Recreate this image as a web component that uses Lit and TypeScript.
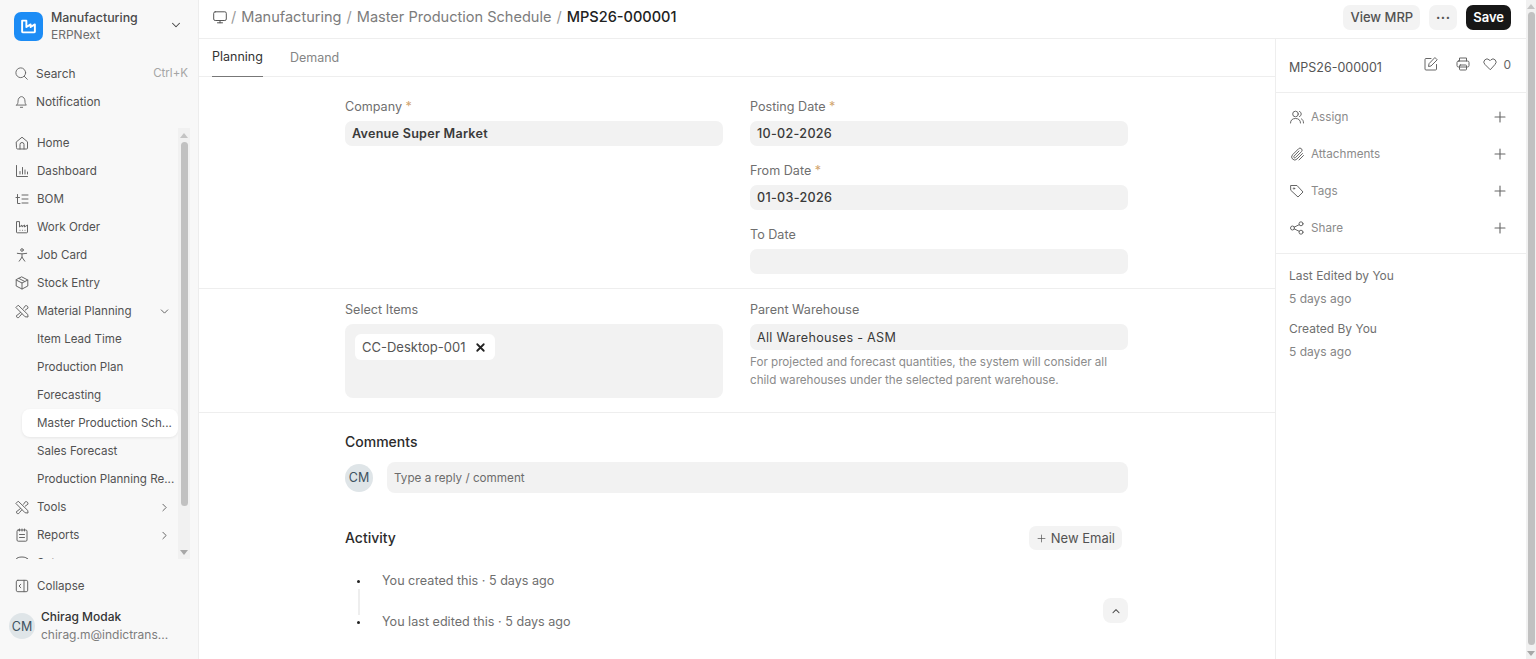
import { LitElement, html, css, svg } from "lit";
import { customElement } from "lit/decorators.js";

const ic = (body: unknown, size = 16, sw = 1) => html`<svg class="ic" width=${size} height=${size} viewBox="0 0 16 16" fill="none" stroke="currentColor" stroke-width=${sw} stroke-linecap="round" stroke-linejoin="round">${body}</svg>`;

const icons: Record<string, unknown> = {
  search: svg`<circle cx="7.2" cy="7.2" r="5.2"/><path d="M11 11l3.2 3.2"/>`,
  bell: svg`<path d="M2.800 11.800h10.400c-1-1-1.500-2-1.500-4.300C11.700 5 10 2.800 8 2.800S4.300 5 4.300 7.500C4.300 9.800 3.800 10.800 2.800 11.800z"/><path d="M6.800 14.200h2.400"/>`,
  home: svg`<path d="M2.500 6.800L8 2.200l5.500 4.600v6.200a1 1 0 0 1-1 1h-9a1 1 0 0 1-1-1z"/><path d="M6 14V9.500a2 2 0 0 1 4 0V14"/>`,
  chart: svg`<path d="M2.500 2.500v11h11"/><path d="M6 11V8.500M8.500 11V4.500M11 11V7M13.500 11V9"/>`,
  bom: svg`<path d="M3.500 3.500v9h2.500M2 6.500h3.500M8 4h6M8 8h6M8 12h6"/>`,
  factory: svg`<path d="M2.500 3v10a.8.8 0 0 0 .8.800h9.400a.8.8 0 0 0 .8-.8V6L10.500 8V6L8 8V6L5.500 8V3z"/><path d="M6 11.300h.01M8.500 11.300h.01M11 11.300h.01"/>`,
  person: svg`<circle cx="8" cy="3" r="1.300"/><path d="M3.300 6.300L8 6.900l4.700-.6M8 6.900v3.300M8 10.200l-2.800 4M8 10.200l2.800 4"/>`,
  box: svg`<path d="M8 2l5.800 3v6L8 14l-5.800-3V5z"/><path d="M2.200 5L8 8l5.800-3M8 8v6M5 3.500l5.800 3"/>`,
  tools: svg`<path d="M2.200 4.200L4.200 2.200 13.800 11.500 14 14 11.500 13.800z"/><path d="M9.500 5.300l1.900-2.600a2 2 0 0 1 2.500 2.500l-2.600 1.900"/><path d="M6.500 9.500l-2.700 2.200a1.500 1.500 0 1 0 1.600 2l2.300-2.700"/>`,
  report: svg`<rect x="3" y="3" width="10" height="11.200" rx="1.200"/><path d="M5.500 2v2M8 2v2M10.500 2v2M5.500 7.500h5M5.500 10.500h5"/>`,
  db: svg`<ellipse cx="8" cy="4" rx="5.500" ry="2"/><path d="M2.500 4v8c0 1.100 2.500 2 5.500 2s5.500-.9 5.500-2V4"/>`,
  collapse: svg`<rect x="2.300" y="2.300" width="11.400" height="11.400" rx="1.500"/><path d="M10 2.300v11.400M6.800 6.300L5 8l1.800 1.700"/>`,
  down: svg`<path d="M4 6l4 4 4-4"/>`,
  right: svg`<path d="M6 4l4 4-4 4"/>`,
  up: svg`<path d="M4.500 10L8 6.500l3.500 3.500"/>`,
  monitor: svg`<rect x="1.700" y="2.800" width="12.600" height="8.700" rx="1.500"/><path d="M8 11.500v2.300M5.500 13.800h5"/>`,
  plus: svg`<path d="M8 3v10M3 8h10"/>`,
  edit: svg`<path d="M13.500 8.500V13a1 1 0 0 1-1 1H3a1 1 0 0 1-1-1V3.500a1 1 0 0 1 1-1h5"/><path d="M12.200 1.800l2 2L8 10l-2.500.5L6 8z"/>`,
  print: svg`<path d="M4.500 5V2h7v3"/><rect x="2" y="5" width="12" height="6" rx="1.500"/><rect x="4.500" y="9" width="7" height="5" rx=".8"/>`,
  heart: svg`<path d="M8 13.500L2.800 8.300a3.100 3.100 0 0 1 0-4.400 3.100 3.100 0 0 1 4.400 0l.8.800.8-.8a3.100 3.100 0 0 1 4.400 0 3.100 3.100 0 0 1 0 4.400z"/>`,
  users: svg`<circle cx="6.500" cy="5" r="2.800"/><path d="M1.500 14c0-3 2-4.500 5-4.500s5 1.500 5 4.500M10.500 2.400a2.800 2.800 0 0 1 0 5.200M12.500 9.900c1.300.7 2 2 2 4.100"/>`,
  clip: svg`<path d="M13.500 7.500L8 13a3 3 0 0 1-4.500-4.200l6-6a2 2 0 0 1 3 2.800l-6 6a1 1 0 0 1-1.500-1.400L10 5"/><path d="M14.500 9.500L10 14"/>`,
  tag: svg`<path d="M2 2.500h6l6 6.500-5 5-7-6.500z"/><circle cx="5" cy="5.500" r=".7"/>`,
  share: svg`<circle cx="3.500" cy="8" r="2"/><circle cx="12" cy="3.800" r="2"/><circle cx="12" cy="12.200" r="2"/><path d="M5.300 7.100l4.900-2.400M5.300 8.900l4.900 2.400"/>`,
  x: svg`<path d="M4 4l8 8M12 4l-8 8"/>`,
};

@customElement("app-root")
export class AppRoot extends LitElement {
  static styles = css`
    :host { display: flex; width: 1536px; height: 659px; overflow: hidden; background: #fff; color: #525252; font-family: Inter, "Liberation Sans", sans-serif; font-size: 13px; }
    * { box-sizing: border-box; }
    .ic { flex: none; display: block; }

    .side { width: 199px; flex: none; display: flex; flex-direction: column; background: #f8f8f8; border-right: 1px solid #ededed; }
    .brand { height: 53px; padding: 12px 15px 0 14px; display: flex; align-items: flex-start; }
    .logo { width: 29px; height: 29px; border-radius: 7px; background: #1c8cf5; display: flex; align-items: center; justify-content: center; color: #fff; flex: none; }
    .brand-text { margin-left: 8px; flex: 1; line-height: 17px; font-size: 12.4px; color: #4a4a4a; }
    .brand-text div:first-child { font-weight: 500; margin-top: -3px; }
    .brand-text div:last-child { color: #6d6d6d; font-size: 12px; }
    .brand .ic { margin-top: 6px; color: #444; }
    .top-items { margin-top: 6px; }
    .row { height: 28px; display: flex; align-items: center; font-size: 11.6px; color: #525252; position: relative; }
    .top-items .row { padding: 0 10px 0 14px; gap: 7px; font-size: 11.9px; }
    .top-items .ic, .nav .row > .ic:first-child, .foot .ic { color: #666; }
    .kbd { margin-left: auto; color: #a5a5a5; font-size: 11.500px; }
    .mid { display: flex; height: 431px; margin-top: 13px; flex: none; overflow: hidden; }
    .nav { width: 178px; flex: none; padding: 1px 0 0 14px; overflow: hidden; }
    .nav .row { gap: 7px; }
    .nav .row .chev { margin-left: auto; margin-right: 7px; color: #555; }
    .nav .sub { margin-left: 8px; padding-left: 15px; width: 156px; white-space: nowrap; }
    .nav .active { background: #fff; border-radius: 8px; box-shadow: 0 1px 3px rgba(0,0,0,.08); }
    .scroll { width: 12px; background: #f1f1f1; display: flex; flex-direction: column; align-items: center; }
    .arrow { height: 14px; flex: none; display: flex; align-items: center; justify-content: center; }
    .tri-up { width: 0; height: 0; border: 4px solid transparent; border-bottom: 5px solid #c4c4c4; border-top: 0; }
    .tri-down { width: 0; height: 0; border: 4px solid transparent; border-top: 5px solid #a8a8a8; border-bottom: 0; }
    .thumb { width: 7px; height: 364px; background: #c1c1c1; border-radius: 4px; }
    .spacer { flex: 1; }
    .foot { padding: 13px 0 0 14px; }
    .foot .row { gap: 7px; }
    .user { display: flex; align-items: center; margin: 8px 0 0 -5px; gap: 6px; }
    .avatar { width: 26px; height: 26px; border-radius: 50%; background: #dfe5e8; color: #3e5260; display: flex; align-items: center; justify-content: center; flex: none; font-size: 12.500px; }
    .user-text { line-height: 18px; font-size: 12px; }
    .user-text div:first-child { color: #333; font-weight: 500; }
    .user-text div:last-child { color: #7c7c7c; font-size: 12px; }

    .content { flex: 1; display: flex; flex-direction: column; min-width: 0; }
    .head { height: 39px; flex: none; display: flex; align-items: center; padding: 0 15px 4px 13px; border-bottom: 1px solid #eee; }
    .crumbs { display: flex; align-items: center; font-size: 14.550px; color: #7c7c7c; white-space: nowrap; margin-top: -1px; }
    .crumbs .ic { color: #555; margin-right: -2px; }
    .crumbs i { font-style: normal; margin: 0 5px; color: #999; }
    .crumbs b { font-weight: 500; color: #222; }
    .actions { margin-left: auto; display: flex; gap: 9px; align-items: center; }
    .btn { height: 25px; padding: 0 7px; border-radius: 7px; background: #f3f3f3; color: #525252; font-size: 13px; display: flex; align-items: center; font-weight: 500; }
    .btn.dark { background: #171717; color: #fff; font-weight: 600; }
    .btn.more { width: 28px; justify-content: center; padding: 0; font-weight: 700; letter-spacing: .5px; }

    .body { flex: 1; display: flex; min-height: 0; }
    .main { width: 1077px; flex: none; border-right: 1px solid #eee; display: flex; flex-direction: column; }
    .tabs { height: 38px; display: flex; gap: 27px; padding-left: 13px; border-bottom: 1px solid #eee; flex: none; font-size: 12.5px; }
    .tab { height: 38px; display: flex; align-items: center; color: #858585; padding-bottom: 2px; }
    .tab.on { color: #333; border-bottom: 1px solid #777; }
    .sec { display: grid; grid-template-columns: 378px 378px; column-gap: 27px; padding-left: 146px; border-bottom: 1px solid #eee; flex: none; }
    .sec.a { height: 212px; padding-top: 22px; }
    .sec.b { height: 124px; padding-top: 13px; }
    .field { margin-bottom: 17px; }
    .label { font-size: 12.600px; line-height: 16px; color: #6f6f6f; margin-bottom: 6px; }
    .label span { color: #d2a56f; }
    .input { height: 25px; border-radius: 7px; background: #f2f2f2; padding: 0 7px; display: flex; align-items: center; color: #3a3a3a; font-weight: 500; font-size: 12.600px; letter-spacing: .3px; }
    .input.bold { font-weight: 600; letter-spacing: .25px; }
    .input.plain { font-weight: 400; height: 26px; }
    .multi { height: 74px; border-radius: 8px; background: #f2f2f2; padding: 10px; }
    .chip { display: inline-flex; align-items: center; gap: 9px; height: 26px; padding: 0 8px 0 7px; background: #fff; border-radius: 6px; font-size: 13px; color: #555; }
    .chip .ic { color: #222; }
    .desc { font-size: 11.650px; line-height: 18px; color: #8c8c8c; margin-top: 3px; }
    .lower { padding: 20px 147px 0 146px; flex: 1; }
    h3 { margin: 0; font-size: 14px; line-height: 18px; font-weight: 500; color: #2b2b2b; }
    .cmt { display: flex; gap: 14px; margin-top: 11px; align-items: center; width: 783px; }
    .cmt .avatar { width: 28px; height: 28px; font-size: 12.500px; }
    .cmt .box { flex: 1; height: 31px; border-radius: 8px; background: #f2f2f2; padding: 0 7px; display: flex; align-items: center; font-size: 11.700px; color: #6c6c6c; }
    .act-head { display: flex; align-items: center; justify-content: space-between; width: 777px; margin-top: 33px; }
    .btn.email { gap: 4px; font-weight: 400; height: 24px; }
    .timeline { position: relative; width: 783px; margin-top: 22px; }
    .ev { height: 41px; display: flex; align-items: flex-start; font-size: 12.600px; color: #6f6f6f; padding-left: 37px; position: relative; line-height: 18px; }
    .dot { position: absolute; left: 12px; top: 8px; width: 3px; height: 3px; background: #222; border-radius: 50%; }
    .line { position: absolute; left: 13px; top: 17px; width: 2px; height: 26px; background: #eeeeee; }
    .up { position: absolute; right: 0; top: 26px; width: 25px; height: 25px; background: #f3f3f3; border-radius: 8px; display: flex; align-items: center; justify-content: center; color: #444; }

    .panel { flex: 1; display: flex; flex-direction: column; }
    .p-head { height: 53px; padding: 3px 15px 0 13px; display: flex; align-items: center; font-size: 12.500px; color: #555; }
    .p-head .tools { margin-left: auto; display: flex; align-items: center; color: #666; margin-top: -6px; }
    .p-head .tools .ic:nth-child(2) { margin: 0 11px 0 16px; }
    .p-head .tools span { margin-left: 5px; font-size: 12px; }
    .p-list { height: 162px; padding: 5px 13px 0; border-top: 1px solid #eee; border-bottom: 1px solid #eee; }
    .p-row { height: 37px; display: flex; align-items: center; gap: 6px; font-size: 11.700px; color: #8b8b8b; }
    .p-row .ic:first-child { color: #666; }
    .p-row .plus { margin-left: auto; color: #555; margin-right: 5px; }
    .meta { padding: 10px 13px 0; font-size: 12px; line-height: 23px; color: #6f6f6f; }
    .meta div.g { margin-bottom: 7px; color: #858585; }
    .bar { width: 10px; flex: none; background: #f1f1f1; display: flex; flex-direction: column; align-items: center; }
    .bar .thumb { height: 633px; width: 7px; }
    .bar .arrow { height: 12px; }
  `;

  private navRow(icon: string, label: string, chev?: string) {
    return html`<div class="row">${ic(icons[icon], 16, 1)}<span>${label}</span>${chev ? html`<span class="chev">${ic(icons[chev], 13, 1.1)}</span>` : ""}</div>`;
  }
  private sub(label: string, active = false) {
    return html`<div class="row sub ${active ? "active" : ""}">${label}</div>`;
  }
  private field(label: string, value: string, req = false, bold = false) {
    return html`<div class="field"><div class="label">${label}${req ? html` <span>*</span>` : ""}</div><div class="input ${bold ? "bold" : ""}">${value}</div></div>`;
  }
  private pRow(icon: string, label: string) {
    return html`<div class="p-row">${ic(icons[icon], 16)}<span>${label}</span><span class="plus">${ic(icons.plus, 16, 1.1)}</span></div>`;
  }

  render() {
    return html`
      <aside class="side">
        <div class="brand">
          <div class="logo"><svg width="17" height="17" viewBox="0 0 16 16" fill="none" stroke="currentColor" stroke-width="1.800" stroke-linejoin="round"><path d="M2 2.500v10.500a.5.5 0 0 0 .5.5h11a.5.5 0 0 0 .5-.5V6l-4 2.500V6L6 8.500V2.500z"/></svg></div>
          <div class="brand-text"><div>Manufacturing</div><div>ERPNext</div></div>
          ${ic(icons.down, 14, 1.2)}
        </div>
        <div class="top-items">
          <div class="row">${ic(icons.search, 15)}<span>Search</span><span class="kbd">Ctrl+K</span></div>
          <div class="row">${ic(icons.bell, 15)}<span>Notification</span></div>
        </div>
        <div class="mid">
          <nav class="nav">
            ${this.navRow("home", "Home")}
            ${this.navRow("chart", "Dashboard")}
            ${this.navRow("bom", "BOM")}
            ${this.navRow("factory", "Work Order")}
            ${this.navRow("person", "Job Card")}
            ${this.navRow("box", "Stock Entry")}
            ${this.navRow("tools", "Material Planning", "down")}
            ${this.sub("Item Lead Time")}
            ${this.sub("Production Plan")}
            ${this.sub("Forecasting")}
            ${this.sub("Master Production Sch...", true)}
            ${this.sub("Sales Forecast")}
            ${this.sub("Production Planning Re...")}
            ${this.navRow("tools", "Tools", "right")}
            ${this.navRow("report", "Reports", "right")}
            ${this.navRow("db", "Setup", "right")}
          </nav>
          <div class="scroll">
            <div class="arrow"><div class="tri-up"></div></div>
            <div class="thumb"></div>
            <div class="spacer"></div>
            <div class="arrow"><div class="tri-down"></div></div>
          </div>
        </div>
        <div class="foot">
          <div class="row">${ic(icons.collapse)}<span>Collapse</span></div>
          <div class="user">
            <div class="avatar">CM</div>
            <div class="user-text"><div>Chirag Modak</div><div>chirag.m@indictrans...</div></div>
          </div>
        </div>
      </aside>
      <div class="content">
        <header class="head">
          <div class="crumbs">
            ${ic(icons.monitor)}<i>/</i><span>Manufacturing</span><i>/</i><span>Master Production Schedule</span><i>/</i><b>MPS26-000001</b>
          </div>
          <div class="actions">
            <div class="btn">View MRP</div>
            <div class="btn more">···</div>
            <div class="btn dark">Save</div>
          </div>
        </header>
        <div class="body">
          <main class="main">
            <div class="tabs"><div class="tab on">Planning</div><div class="tab">Demand</div></div>
            <section class="sec a">
              <div>${this.field("Company", "Avenue Super Market", true, true)}</div>
              <div>
                ${this.field("Posting Date", "10-02-2026", true)}
                ${this.field("From Date", "01-03-2026", true)}
                ${this.field("To Date", "")}
              </div>
            </section>
            <section class="sec b">
              <div>
                <div class="label">Select Items</div>
                <div class="multi"><span class="chip">CC-Desktop-001 ${ic(icons.x, 13, 2.2)}</span></div>
              </div>
              <div>
                <div class="label">Parent Warehouse</div>
                <div class="input plain">All Warehouses - ASM</div>
                <div class="desc">For projected and forecast quantities, the system will consider all child warehouses under the selected parent warehouse.</div>
              </div>
            </section>
            <section class="lower">
              <h3>Comments</h3>
              <div class="cmt"><div class="avatar">CM</div><div class="box">Type a reply / comment</div></div>
              <div class="act-head"><h3>Activity</h3><div class="btn email">${ic(icons.plus, 11)}New Email</div></div>
              <div class="timeline">
                <div class="ev"><span class="dot"></span><span class="line"></span>You created this · 5 days ago</div>
                <div class="ev"><span class="dot"></span>You last edited this · 5 days ago</div>
                <div class="up">${ic(icons.up, 14, 1.2)}</div>
              </div>
            </section>
          </main>
          <aside class="panel">
            <div class="p-head"><span>MPS26-000001</span><div class="tools">${ic(icons.edit, 16)}${ic(icons.print, 16)}${ic(icons.heart, 16)}<span>0</span></div></div>
            <div class="p-list">
              ${this.pRow("users", "Assign")}
              ${this.pRow("clip", "Attachments")}
              ${this.pRow("tag", "Tags")}
              ${this.pRow("share", "Share")}
            </div>
            <div class="meta">
              <div>Last Edited by You</div><div class="g">5 days ago</div>
              <div>Created By You</div><div class="g">5 days ago</div>
            </div>
          </aside>
        </div>
      </div>
      <div class="bar">
        <div class="arrow"><div class="tri-up"></div></div>
        <div class="thumb"></div>
        <div class="spacer"></div>
        <div class="arrow"><div class="tri-down"></div></div>
      </div>
    `;
  }
}
